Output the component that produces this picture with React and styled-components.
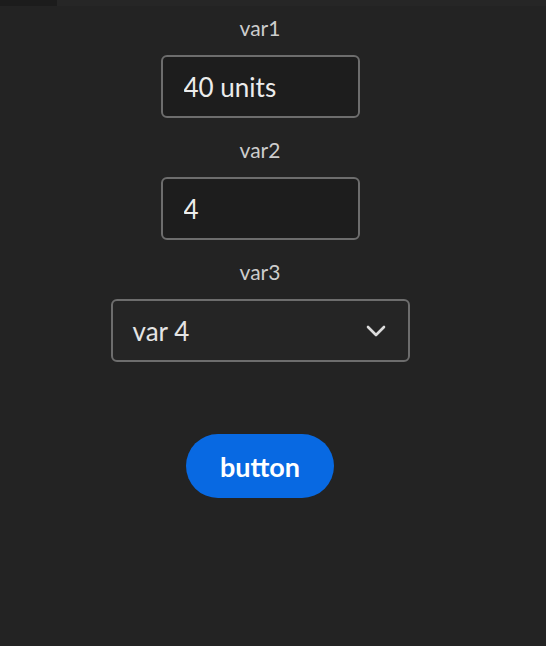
import styled, { createGlobalStyle } from 'styled-components';

const GlobalStyle = createGlobalStyle`
  html, body {
    margin: 0;
    padding: 0;
    background: #232323;
    font-family: Lato, "Open Sans", sans-serif;
  }
`;

const Page = styled.div`
  width: 546px;
  height: 646px;
  background: #232323;
  overflow: hidden;
`;

const TopBar = styled.div`
  display: flex;
  height: 6px;
  background: #262626;
`;

const TopThumb = styled.div`
  width: 57px;
  background: #1c1c1c;
`;

const Form = styled.div`
  width: 520px;
  display: flex;
  flex-direction: column;
  align-items: center;
  gap: 19px;
  padding-top: 9px;
`;

const Field = styled.div`
  display: flex;
  flex-direction: column;
  align-items: center;
`;

const Label = styled.label`
  height: 26px;
  line-height: 26px;
  margin-bottom: 14px;
  font-size: 21px;
  color: #cdcdcd;
`;

const TextInput = styled.input`
  box-sizing: border-box;
  width: 199px;
  height: 63px;
  padding: 0 0 0 21px;
  border: 2px solid #6d6d6d;
  border-radius: 6px;
  background: #1d1d1d;
  color: #ececec;
  font-family: inherit;
  font-size: 26px;
  outline: none;
`;

const SelectBox = styled.div`
  box-sizing: border-box;
  width: 299px;
  height: 63px;
  display: flex;
  align-items: center;
  justify-content: space-between;
  padding: 0 22px 0 20px;
  border: 2px solid #6d6d6d;
  border-radius: 6px;
  background: #252525;
  color: #e4e4e4;
  font-size: 26px;
`;

const Chevron = () => (
  <svg width="20" height="12" viewBox="0 0 20 12" fill="none">
    <path d="M2 2 L10 10 L18 2" stroke="#dcdcdc" strokeWidth="2.6" strokeLinecap="round" strokeLinejoin="round" />
  </svg>
);

const Button = styled.button`
  margin-top: 53px;
  width: 148px;
  height: 64px;
  border: none;
  border-radius: 32px;
  background: #0869e2;
  color: #fff;
  font-family: inherit;
  font-size: 27px;
  font-weight: 700;
  cursor: pointer;
`;

const App = () => (
  <Page>
    <GlobalStyle />
    <TopBar>
      <TopThumb />
    </TopBar>
    <Form>
      <Field>
        <Label>var1</Label>
        <TextInput defaultValue="40 units" />
      </Field>
      <Field>
        <Label>var2</Label>
        <TextInput defaultValue="4" />
      </Field>
      <Field>
        <Label>var3</Label>
        <SelectBox>
          <span>var 4</span>
          <Chevron />
        </SelectBox>
      </Field>
      <Button>button</Button>
    </Form>
  </Page>
);

export default App;
